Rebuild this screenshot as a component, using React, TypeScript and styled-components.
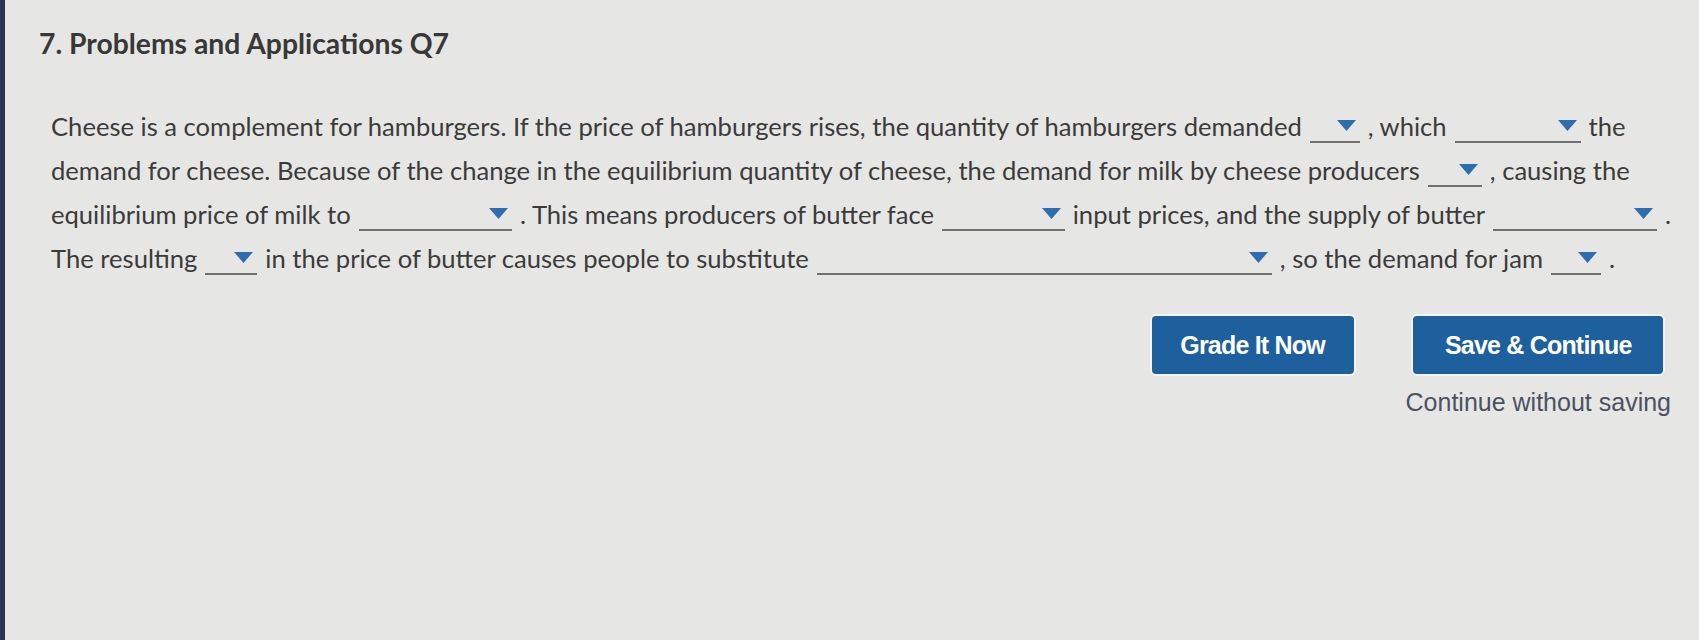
import React from 'react'
import styled, { createGlobalStyle } from 'styled-components'

const GlobalStyle = createGlobalStyle`
  html, body {
    margin: 0;
    padding: 0;
    background: #e6e6e4;
  }
`

type Part = string | number

const lines: Part[][] = [
  ['Cheese is a complement for hamburgers. If the price of hamburgers rises, the quantity of hamburgers demanded', 50, ', which', 126, 'the'],
  ['demand for cheese. Because of the change in the equilibrium quantity of cheese, the demand for milk by cheese producers', 54, ', causing the'],
  ['equilibrium price of milk to', 160, '. This means producers of butter face', 128, 'input prices, and the supply of butter', 171, '.'],
  ['The resulting', 52, 'in the price of butter causes people to substitute', 455, ', so the demand for jam', 50, '.'],
]

const Caret = () => (
  <svg width="19" height="11" viewBox="0 0 19 11">
    <path d="M0 0 L19 0 L9.5 11 Z" fill="#2f6eae" />
  </svg>
)

const App = () => {
  return (
    <>
      <GlobalStyle />
      <Page>
        <Title>7. Problems and Applications Q7</Title>
        <Paragraph>
          {lines.map((line, i) => (
            <Line key={i}>
              {line.map((part, j) =>
                typeof part === 'number' ? (
                  <Dropdown key={j} $width={part}>
                    <Caret />
                  </Dropdown>
                ) : (
                  <span key={j}>{part}</span>
                )
              )}
            </Line>
          ))}
        </Paragraph>
        <Actions>
          <Button $width={206}>Grade It Now</Button>
          <SaveColumn>
            <Button $width={254}>Save &amp; Continue</Button>
            <SkipLink>Continue without saving</SkipLink>
          </SaveColumn>
        </Actions>
      </Page>
    </>
  )
}

export default App

const Page = styled.div`
  min-height: 640px;
  box-sizing: border-box;
  border-left: 5px solid #2b3552;
  padding: 26px 28px 0 34px;
`

const Title = styled.h1`
  margin: 0;
  font-family: Lato, 'Open Sans', sans-serif;
  font-weight: 700;
  font-size: 28.3px;
  line-height: 34px;
  color: #383838;
`

const Paragraph = styled.div`
  margin-top: 44px;
  padding-left: 12px;
  font-family: Lato, 'Open Sans', sans-serif;
  font-size: 25.6px;
  line-height: 44px;
  color: #3b3b3b;
`

const Line = styled.div`
  white-space: nowrap;
  display: flex;
  align-items: baseline;
  gap: 8px;
`

const Dropdown = styled.span<{ $width: number }>`
  display: inline-flex;
  justify-content: flex-end;
  align-items: flex-start;
  box-sizing: border-box;
  width: ${({ $width }) => $width}px;
  height: 24px;
  padding: 1px 4px 0 0;
  border-bottom: 2px solid #707070;
  transform: translateY(-5px);
`

const Actions = styled.div`
  margin-top: 34px;
  display: flex;
  justify-content: flex-end;
  align-items: flex-start;
  gap: 50px;
`

const SaveColumn = styled.div`
  display: flex;
  flex-direction: column;
  align-items: center;
  gap: 12px;
`

const Button = styled.button<{ $width: number }>`
  width: ${({ $width }) => $width}px;
  height: 62px;
  padding: 0;
  border: 2px solid #f2f4f6;
  border-radius: 6px;
  background: #1e609d;
  color: #ffffff;
  font-family: 'Liberation Sans', Arial, sans-serif;
  font-weight: 700;
  font-size: 25px;
  letter-spacing: -0.8px;
  cursor: pointer;
`

const SkipLink = styled.a`
  font-family: 'Liberation Sans', Arial, sans-serif;
  font-size: 25px;
  color: #4a5261;
  cursor: pointer;
`
